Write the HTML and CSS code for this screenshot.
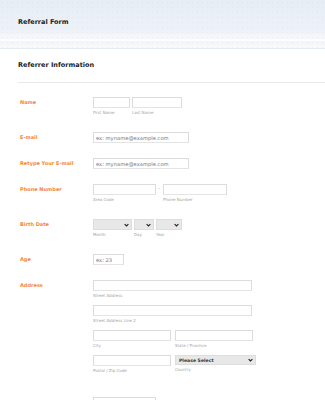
FILE: index.html
```html
<!DOCTYPE html>
<html lang="en">

<head>
    <meta charset="UTF-8">
    <meta name="viewport" content="width=device-width, initial-scale=1.0">
    <title>Referral Form</title>
    <link rel="stylesheet" href="styles.css">
</head>

<body>
    <div class="header">
        <h1>Referral Form</h1>
    </div>
    <div class="section">
        <h2>Referrer Information</h2>
    </div>
    <ul class="fields">
        <li class="row">
            <label class="label">Name</label>
            <div class="group">
                <div class="field">
                    <input type="text" class="w-first">
                    <span class="sub">First Name</span>
                </div>
                <div class="field">
                    <input type="text" class="w-last">
                    <span class="sub">Last Name</span>
                </div>
            </div>
        </li>
        <li class="row">
            <label class="label">E-mail</label>
            <input type="text" class="w-email" placeholder="ex: myname@example.com">
        </li>
        <li class="row">
            <label class="label">Retype Your E-mail</label>
            <input type="text" class="w-email" placeholder="ex: myname@example.com">
        </li>
        <li class="row">
            <label class="label">Phone Number</label>
            <div class="group phone">
                <div class="field">
                    <input type="text" class="w-phone">
                    <span class="sub">Area Code</span>
                </div>
                <span class="dash">-</span>
                <div class="field">
                    <input type="text" class="w-phone2">
                    <span class="sub">Phone Number</span>
                </div>
            </div>
        </li>
        <li class="row">
            <label class="label">Birth Date</label>
            <div class="group">
                <div class="field">
                    <div class="select w-month"><span></span><svg viewBox="0 0 8 6"><path d="M1 1.5 L4 4.5 L7 1.5" /></svg></div>
                    <span class="sub">Month</span>
                </div>
                <div class="field">
                    <div class="select w-day"><span></span><svg viewBox="0 0 8 6"><path d="M1 1.5 L4 4.5 L7 1.5" /></svg></div>
                    <span class="sub">Day</span>
                </div>
                <div class="field">
                    <div class="select w-year"><span></span><svg viewBox="0 0 8 6"><path d="M1 1.5 L4 4.5 L7 1.5" /></svg></div>
                    <span class="sub">Year</span>
                </div>
            </div>
        </li>
        <li class="row">
            <label class="label">Age</label>
            <input type="text" class="w-age" placeholder="ex: 23">
        </li>
        <li class="row address">
            <label class="label">Address</label>
            <div class="lines">
                <div class="field line">
                    <input type="text" class="w-full">
                    <span class="sub">Street Address</span>
                </div>
                <div class="field line">
                    <input type="text" class="w-full">
                    <span class="sub">Street Address Line 2</span>
                </div>
                <div class="group line wide">
                    <div class="field">
                        <input type="text" class="w-half">
                        <span class="sub">City</span>
                    </div>
                    <div class="field">
                        <input type="text" class="w-half">
                        <span class="sub">State / Province</span>
                    </div>
                </div>
                <div class="group line wide">
                    <div class="field">
                        <input type="text" class="w-half">
                        <span class="sub">Postal / Zip Code</span>
                    </div>
                    <div class="field">
                        <div class="select w-country"><span>Please Select</span><svg viewBox="0 0 8 6"><path d="M1 1.5 L4 4.5 L7 1.5" /></svg></div>
                        <span class="sub">Country</span>
                    </div>
                </div>
            </div>
        </li>
        <li class="row">
            <label class="label"></label>
            <input type="text" class="w-phone">
        </li>
    </ul>
</body>

</html>
```

FILE: styles.css
```css
body {
    margin: 0;
    font-family: "DejaVu Sans", Verdana, sans-serif;
    background: #FFF;
    color: #333;
}

.header {
    height: 48px;
    padding-left: 18px;
    background-color: #FFF;
    background-image:
        radial-gradient(circle, rgba(190, 205, 222, 0.25) 0.6px, transparent 0.9px),
        linear-gradient(#E6EDF5 0px, #EDF2F8 30px, #F6F8FB 39px, #FFF 40px, #F1F5F9 42px, #F8FAFC 47px);
    background-size: 5px 5px, 100% 100%;
    border-bottom: 1px solid #E4EBF2;
}

.header h1 {
    margin: 0;
    padding-top: 16px;
    font-size: 6.5px;
    line-height: 13px;
    font-weight: bold;
    color: #222;
}

.section {
    margin-left: 18px;
    padding: 10px 0;
    border-bottom: 1px solid #E8E8E8;
}

.section h2 {
    margin: 0;
    font-size: 6.5px;
    line-height: 13px;
    font-weight: bold;
    color: #222;
}

.fields {
    list-style: none;
    margin: 0;
    padding: 14px 0 0 20px;
}

.row {
    display: flex;
    align-items: flex-start;
    margin-bottom: 15px;
}

.label {
    width: 73px;
    flex: none;
    font-size: 5px;
    line-height: 11px;
    font-weight: bold;
    color: #F2873D;
}

.group {
    display: flex;
    gap: 2px;
}

.group.wide {
    gap: 4px;
}

.group.phone {
    gap: 0;
}

.dash {
    width: 7px;
    text-align: center;
    font-size: 5px;
    line-height: 9px;
    color: #F2873D;
}

.field {
    display: flex;
    flex-direction: column;
}

.lines .line {
    margin-bottom: 5px;
}

.address {
    margin-bottom: 17px;
}

input[type="text"] {
    box-sizing: border-box;
    height: 11px;
    margin: 0;
    padding: 0 2px;
    border: 1px solid #DCDCDC;
    border-bottom-color: #E4E4E4;
    background: #FFF;
    font-family: "DejaVu Sans", Verdana, sans-serif;
    font-size: 5.2px;
    color: #555;
    outline: none;
}

input::placeholder {
    color: #7A7A7A;
}

.sub {
    font-size: 4px;
    line-height: 9px;
    color: #A0A0A0;
}

.select {
    box-sizing: border-box;
    height: 11px;
    display: flex;
    align-items: center;
    justify-content: space-between;
    padding: 0 2px 0 3px;
    background: #E8E8E8;
    border: 1px solid #DDD;
    font-size: 4.6px;
    font-weight: bold;
    color: #333;
}

.select svg {
    width: 5px;
    height: 4px;
    fill: none;
    stroke: #222;
    stroke-width: 1.8;
}

.w-first { width: 37px; }
.w-last { width: 50px; }
.w-email { width: 96px; }
.w-phone { width: 63px; }
.w-phone2 { width: 64px; }
.w-month { width: 39px; }
.w-day { width: 20px; }
.w-year { width: 26px; }
.w-age { width: 31px; }
.w-full { width: 159px; }
.w-half { width: 78px; }
.w-country { width: 81px; height: 10px; }
```
